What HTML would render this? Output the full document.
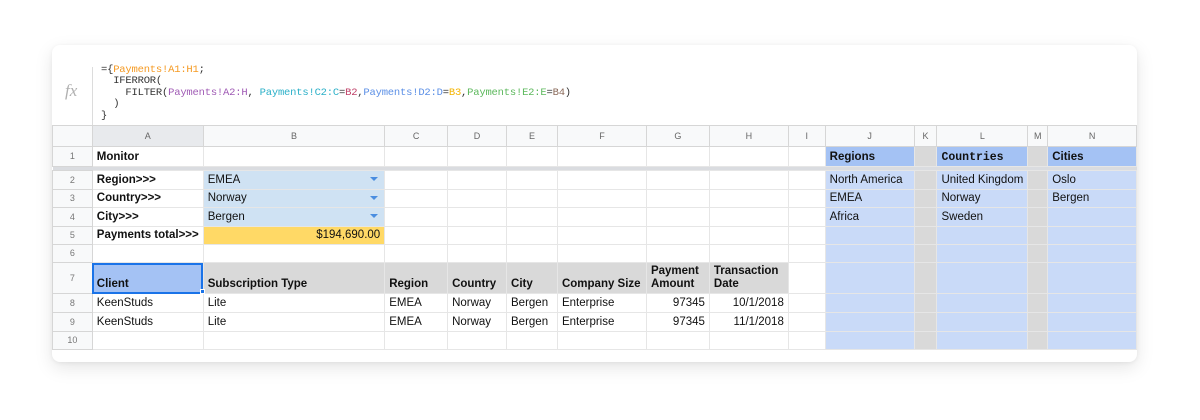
<!DOCTYPE html>
<html><head><meta charset="utf-8"><style>
*{margin:0;padding:0;box-sizing:border-box}
body{width:1200px;height:420px;background:#fff;position:relative;overflow:hidden;font-family:"Liberation Sans",Arial,sans-serif}
.card{position:absolute;left:52px;top:45px;width:1085px;height:317px;background:#fff;border-radius:8px;box-shadow:0 6px 18px rgba(0,0,0,.10),0 1px 4px rgba(0,0,0,.06);overflow:hidden}
.fx{position:absolute;left:13px;top:36px;font-family:"Liberation Serif",serif;font-style:italic;font-size:17px;color:#b0b0b0}
.fxsep{position:absolute;left:40px;top:22px;width:1px;height:58px;background:#dcdcdc}
.formula{position:absolute;left:49px;top:20px;font-family:"Liberation Mono",monospace;font-size:10.5px;letter-spacing:-0.2px;line-height:11.4px;color:#333;white-space:pre}
.o{color:#f59a23}.p{color:#a05bb5}.c{color:#2bb0c8}.r{color:#c0436a}.b{color:#5b8fe6}.y{color:#f4b400}.g{color:#5cb85c}.k{color:#8a6a5a}
table{position:absolute;left:0;top:80px;border-collapse:collapse;table-layout:fixed;font-size:11.5px;color:#111}
td{border:1px solid #e6e6e6;padding:0 4px 2px;vertical-align:bottom;white-space:nowrap;overflow:hidden;line-height:13px}
tr.h td{background:#f8f9fa;color:#666;font-size:9px;text-align:center;vertical-align:middle;padding:0;border-color:#d6d6d6}
td.n{background:#f8f9fa;color:#777;font-size:9px;text-align:center;vertical-align:middle;padding:0;border-color:#d6d6d6}
tr.sep td{background:#dadce0;border:none;padding:0;height:4px}
.bd{font-weight:bold}
.bl{background:#c9daf8}.bh{background:#a4c2f4;font-weight:bold}.gy{background:#d9d9d9}
.lb{background:#cfe2f3;position:relative}
.lb:after{content:"";position:absolute;right:6px;top:6px;border-left:4px solid transparent;border-right:4px solid transparent;border-top:4px solid #4a8de0}
.yl{background:#ffd966;text-align:right}
.r7 td{background:#d9d9d9;font-weight:bold}
.r7 td.n{background:#f8f9fa;font-weight:normal}
.r7 td.bl{background:#c9daf8}.r7 td.gy{background:#d9d9d9}.r7 td.w{background:#fff}
.sel{background:#a4c2f4!important;outline:2px solid #1a73e8;outline-offset:-2px;position:relative}
.rt{text-align:right}
</style></head><body>
<div class="card">
<div class="fx">fx</div><div class="fxsep"></div>
<div class="formula">={<span class="o">Payments!A1:H1</span>;
  IFERROR(
    FILTER(<span class="p">Payments!A2:H</span>, <span class="c">Payments!C2:C</span>=<span class="r">B2</span>,<span class="b">Payments!D2:D</span>=<span class="y">B3</span>,<span class="g">Payments!E2:E</span>=<span class="k">B4</span>)
  )
}</div>
<table>
<colgroup><col style="width:40px"><col style="width:110px"><col style="width:182px"><col style="width:63px"><col style="width:59px"><col style="width:51px"><col style="width:89px"><col style="width:63px"><col style="width:79px"><col style="width:37px"><col style="width:89px"><col style="width:23px"><col style="width:90px"><col style="width:20px"><col style="width:89px"></colgroup>
<tr class="h" style="height:21px"><td></td><td style="background:#e8eaed">A</td><td>B</td><td>C</td><td>D</td><td>E</td><td>F</td><td>G</td><td>H</td><td>I</td><td>J</td><td>K</td><td>L</td><td>M</td><td>N</td></tr>
<tr style="height:20px"><td class="n">1</td><td class="bd">Monitor</td><td></td><td></td><td></td><td></td><td></td><td></td><td></td><td></td><td class="bh">Regions</td><td class="gy"></td><td class="bh" style="font-family:'Liberation Mono',monospace">Countries</td><td class="gy"></td><td class="bh">Cities</td></tr>
<tr class="sep"><td colspan="15"></td></tr>
<tr style="height:19px"><td class="n">2</td><td class="bd">Region&gt;&gt;&gt;</td><td class="lb">EMEA</td><td></td><td></td><td></td><td></td><td></td><td></td><td></td><td class="bl">North America</td><td class="gy"></td><td class="bl">United Kingdom</td><td class="gy"></td><td class="bl">Oslo</td></tr>
<tr style="height:18px"><td class="n">3</td><td class="bd">Country&gt;&gt;&gt;</td><td class="lb">Norway</td><td></td><td></td><td></td><td></td><td></td><td></td><td></td><td class="bl">EMEA</td><td class="gy"></td><td class="bl">Norway</td><td class="gy"></td><td class="bl">Bergen</td></tr>
<tr style="height:19px"><td class="n">4</td><td class="bd">City&gt;&gt;&gt;</td><td class="lb">Bergen</td><td></td><td></td><td></td><td></td><td></td><td></td><td></td><td class="bl">Africa</td><td class="gy"></td><td class="bl">Sweden</td><td class="gy"></td><td class="bl"></td></tr>
<tr style="height:18px"><td class="n">5</td><td class="bd">Payments total&gt;&gt;&gt;</td><td class="yl">$194,690.00</td><td></td><td></td><td></td><td></td><td></td><td></td><td></td><td class="bl"></td><td class="gy"></td><td class="bl"></td><td class="gy"></td><td class="bl"></td></tr>
<tr style="height:18px"><td class="n">6</td><td></td><td></td><td></td><td></td><td></td><td></td><td></td><td></td><td></td><td class="bl"></td><td class="gy"></td><td class="bl"></td><td class="gy"></td><td class="bl"></td></tr>
<tr class="r7" style="height:31px"><td class="n">7</td><td class="sel">Client</td><td>Subscription Type</td><td>Region</td><td>Country</td><td>City</td><td>Company Size</td><td>Payment<br>Amount</td><td>Transaction<br>Date</td><td class="w"></td><td class="bl"></td><td class="gy"></td><td class="bl"></td><td class="gy"></td><td class="bl"></td></tr>
<tr style="height:19px"><td class="n">8</td><td>KeenStuds</td><td>Lite</td><td>EMEA</td><td>Norway</td><td>Bergen</td><td>Enterprise</td><td class="rt">97345</td><td class="rt">10/1/2018</td><td></td><td class="bl"></td><td class="gy"></td><td class="bl"></td><td class="gy"></td><td class="bl"></td></tr>
<tr style="height:19px"><td class="n">9</td><td>KeenStuds</td><td>Lite</td><td>EMEA</td><td>Norway</td><td>Bergen</td><td>Enterprise</td><td class="rt">97345</td><td class="rt">11/1/2018</td><td></td><td class="bl"></td><td class="gy"></td><td class="bl"></td><td class="gy"></td><td class="bl"></td></tr>
<tr style="height:18px"><td class="n">10</td><td></td><td></td><td></td><td></td><td></td><td></td><td></td><td></td><td></td><td class="bl"></td><td class="gy"></td><td class="bl"></td><td class="gy"></td><td class="bl"></td></tr>
</table>
<div style="position:absolute;left:148px;top:244px;width:5px;height:5px;background:#1a73e8;border:1px solid #fff"></div>
</div>
</body></html>
